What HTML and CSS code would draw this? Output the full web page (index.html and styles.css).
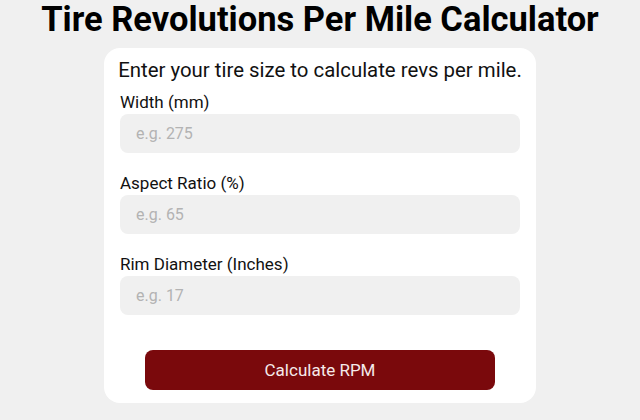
FILE: index.html
```html
<!DOCTYPE html>
<html lang="en">
<head>
  <meta charset="UTF-8">
  <meta name="viewport" content="width=device-width, initial-scale=1.0">
  <title>Tire Revolutions Per Mile Calculator</title>
  <link rel="stylesheet" href="styles.css">
</head>
<body>
  <h1>Tire Revolutions Per Mile Calculator</h1>
  <div class="calc-card">
    <p class="intro">Enter your tire size to calculate revs per mile.</p>
    <form id="rpm-form">
      <label for="tire-width">Width (mm)</label>
      <input type="number" id="tire-width" placeholder="e.g. 275">

      <label for="aspect-ratio">Aspect Ratio (%)</label>
      <input type="number" id="aspect-ratio" placeholder="e.g. 65">

      <label for="rim-diameter">Rim Diameter (Inches)</label>
      <input type="number" id="rim-diameter" placeholder="e.g. 17">

      <button type="submit">Calculate RPM</button>
    </form>
    <div id="result"></div>
  </div>

  <script>
    document.getElementById("rpm-form").addEventListener("submit", function(e) {
      e.preventDefault();
      const width = parseFloat(document.getElementById("tire-width").value);
      const ratio = parseFloat(document.getElementById("aspect-ratio").value);
      const rim = parseFloat(document.getElementById("rim-diameter").value);
      if (isNaN(width) || isNaN(ratio) || isNaN(rim)) return;

      // overall diameter in inches, then revs per mile
      const diameter = rim + 2 * (width * ratio / 100) / 25.4;
      const revs = 63360 / (Math.PI * diameter);
      document.getElementById("result").innerText = `Revs per mile: ${revs.toFixed(0)}`;
    });
  </script>
</body>
</html>
```

FILE: styles.css
```css
body {
  font-family: Roboto, "Noto Sans", sans-serif;
  background-color: #f0f0f0;
  color: #111;
  margin: 0;
  padding: 0;
  display: flex;
  flex-direction: column;
  align-items: center;
}
h1 {
  font-size: 34.5px;
  font-weight: 700;
  margin: 1px 0 11px;
  line-height: 36px;
  color: #000;
}
.calc-card {
  background-color: #fff;
  width: 432px;
  box-sizing: border-box;
  border-radius: 16px;
  padding: 10px 16px 13px;
}
.intro {
  margin: 0 -6px 9px;
  font-size: 20.4px;
  line-height: 25px;
  text-align: center;
  white-space: nowrap;
}
#rpm-form {
  display: flex;
  flex-direction: column;
}
#rpm-form label {
  font-size: 17px;
  line-height: 20px;
  margin-bottom: 2px;
}
#rpm-form input {
  height: 39px;
  border: none;
  border-radius: 8px;
  background-color: #f0f0f0;
  padding: 0 16px;
  font-family: inherit;
  font-size: 16px;
  margin-bottom: 20px;
  outline: none;
}
#rpm-form input::placeholder {
  color: #b3b3b3;
}
#rpm-form button {
  align-self: center;
  width: 350px;
  height: 40px;
  margin-top: 15px;
  border: none;
  border-radius: 8px;
  background-color: #7a090c;
  color: #f5eaea;
  font-family: inherit;
  font-size: 17px;
  cursor: pointer;
}
#rpm-form button:hover {
  background-color: #600508;
}
#result {
  text-align: center;
  font-weight: bold;
}
#result:empty {
  display: none;
}
```
